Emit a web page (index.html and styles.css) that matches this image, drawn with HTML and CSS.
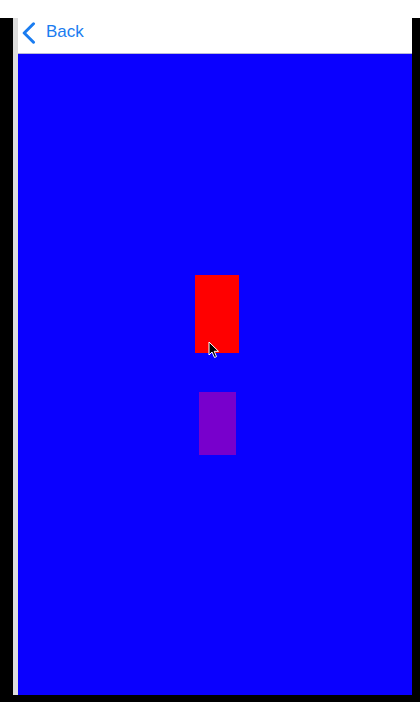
FILE: index.html
```html
<!DOCTYPE html>
<html>
<head>
<meta charset="utf-8">
<link rel="stylesheet" href="styles.css">
</head>
<body>
<div class="screen">
  <div class="gutter-left"><div class="edge"></div></div>
  <div class="main">
    <div class="navbar">
      <svg class="chev" width="15" height="22" viewBox="0 0 15 22"><path d="M12.5 1.8 L3.2 11 L12.5 20.2" fill="none" stroke="#1a7cf0" stroke-width="3" stroke-linecap="round" stroke-linejoin="round"/></svg>
      <span class="back">Back</span>
    </div>
    <div class="stage">
      <div class="red"></div>
      <div class="purple"></div>
    </div>
  </div>
  <div class="gutter-right"></div>
</div>
<svg class="cursor" width="12" height="18" viewBox="0 0 12 18"><path d="M1 1 L1 14 L4 11 L6.5 16.5 L8.5 15.6 L6.2 10.3 L10.5 10.3 Z" fill="#000" stroke="#fff" stroke-width="1" stroke-linejoin="round"/></svg>
</body>
</html>
```
FILE: styles.css
```css
html, body {
  margin: 0;
  padding: 0;
  background: #ffffff;
}
body {
  width: 420px;
  height: 720px;
  overflow: hidden;
  position: relative;
  font-family: "Liberation Sans", Arial, sans-serif;
}
.screen {
  margin-top: 18px;
  height: 684px;
  background: #000000;
  display: flex;
  align-items: flex-start;
}
.gutter-left {
  width: 18px;
  height: 677px;
  display: flex;
  justify-content: flex-end;
}
.edge {
  width: 5px;
  height: 677px;
  background: #dcdcdc;
}
.main {
  width: 394px;
  height: 677px;
  display: flex;
  flex-direction: column;
}
.gutter-right {
  width: 8px;
}
.navbar {
  height: 36px;
  flex: none;
  background: #ffffff;
  display: flex;
  align-items: flex-start;
  box-sizing: border-box;
  border-bottom: 1px solid #b8b8d8;
  padding-left: 3px;
  padding-top: 3px;
}
.chev {
  display: block;
  margin-top: 1px;
}
.back {
  color: #1a7cf0;
  font-size: 17px;
  margin-left: 10px;
  line-height: 20px;
  margin-top: 0.5px;
}
.stage {
  flex: 1;
  background: #0a00ff;
  display: flex;
  flex-direction: column;
  align-items: flex-start;
}
.red {
  width: 44px;
  height: 78px;
  background: #ff0000;
  margin-top: 221px;
  margin-left: 177px;
}
.purple {
  width: 37px;
  height: 63px;
  background: #7800cc;
  margin-top: 39px;
  margin-left: 181px;
}
.cursor {
  position: absolute;
  left: 208px;
  top: 341px;
}
```
